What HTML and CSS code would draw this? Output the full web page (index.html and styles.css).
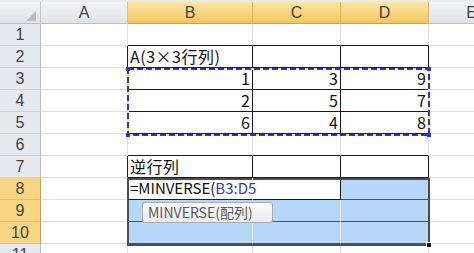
FILE: index.html
```html
<!DOCTYPE html>
<html lang="ja">
<head>
  <meta charset="UTF-8" />
  <title>MINVERSE</title>
  <link rel="stylesheet" href="styles.css">
</head>
<body>
  <div class="sheet">
    <div class="topbar"></div>
    <div class="grid">
      <!-- column headers -->
      <div class="hd corner">
        <svg width="41" height="22" viewBox="0 0 41 22"><polygon points="26,19 36,19 36,9" fill="#b8bdc4"/></svg>
      </div>
      <div class="hd">A</div>
      <div class="hd on">B</div>
      <div class="hd on">C</div>
      <div class="hd on">D</div>
      <div class="hd">E</div>

      <div class="rh">1</div>
      <div class="c"></div>
      <div class="c bt"></div>
      <div class="c bt"></div>
      <div class="c bt"></div>
      <div class="c"></div>

      <div class="rh">2</div>
      <div class="c bl"></div>
      <div class="c bx label">A(3×3行列)</div>
      <div class="c bx"></div>
      <div class="c bx"></div>
      <div class="c"></div>

      <div class="rh">3</div>
      <div class="c bl"></div>
      <div class="c bx n">1</div>
      <div class="c bx n">3</div>
      <div class="c bx n">9</div>
      <div class="c"></div>

      <div class="rh">4</div>
      <div class="c bl"></div>
      <div class="c bx n">2</div>
      <div class="c bx n">5</div>
      <div class="c bx n">7</div>
      <div class="c"></div>

      <div class="rh">5</div>
      <div class="c bl"></div>
      <div class="c bx n">6</div>
      <div class="c bx n">4</div>
      <div class="c bx n">8</div>
      <div class="c"></div>

      <div class="rh">6</div>
      <div class="c"></div>
      <div class="c bt"></div>
      <div class="c bt"></div>
      <div class="c bt"></div>
      <div class="c"></div>

      <div class="rh">7</div>
      <div class="c bl"></div>
      <div class="c bx label">逆行列</div>
      <div class="c bx"></div>
      <div class="c bx"></div>
      <div class="c"></div>

      <div class="rh on">8</div>
      <div class="c bl"></div>
      <div class="c bx edit">=MINVERSE(<span class="ref">B3:D5</span></div>
      <div class="c bx"></div>
      <div class="c bx sel"></div>
      <div class="c"></div>

      <div class="rh on">9</div>
      <div class="c bl"></div>
      <div class="c bx sel"></div>
      <div class="c bx sel"></div>
      <div class="c bx sel"></div>
      <div class="c"></div>

      <div class="rh on">10</div>
      <div class="c bl"></div>
      <div class="c bx sel"></div>
      <div class="c bx sel"></div>
      <div class="c bx sel"></div>
      <div class="c"></div>

      <div class="rh">11</div>
      <div class="c"></div>
      <div class="c"></div>
      <div class="c"></div>
      <div class="c"></div>
      <div class="c"></div>
    </div>

    <!-- range reference outline B3:D5 -->
    <svg class="refbox" width="305" height="70" viewBox="0 0 305 70">
      <rect x="2" y="2" width="301" height="66" fill="none" stroke="#f2ec5a" stroke-width="2"/>
      <rect x="2" y="2" width="301" height="66" fill="none" stroke="#2f2fd8" stroke-width="2" stroke-dasharray="6 3"/>
      <rect x="0" y="0" width="4" height="4" fill="#2f2fd8"/>
      <rect x="301" y="0" width="4" height="4" fill="#2f2fd8"/>
      <rect x="0" y="66" width="4" height="4" fill="#2f2fd8"/>
      <rect x="301" y="66" width="4" height="4" fill="#2f2fd8"/>
    </svg>

    <div class="selbox"></div>
    <div class="fillhandle"></div>

    <div class="tip">MINVERSE(配列)</div>
  </div>
</body>
</html>
```

FILE: styles.css
```css
* {
  box-sizing: border-box;
  margin: 0;
  padding: 0;
}

body {
  width: 474px;
  height: 253px;
  overflow: hidden;
  background: #fff;
  font-family: "Noto Sans CJK JP", "Liberation Sans", sans-serif;
  font-size: 15px;
  color: #111;
}

.sheet {
  position: relative;
  width: 560px;
}

.topbar {
  height: 3px;
  background: #e9ecef;
  border-bottom: 1px solid #c9cdd2;
}

.grid {
  display: grid;
  grid-template-columns: 41px 87px 125px 88px 88px 86px;
  grid-auto-rows: 22px;
  margin-top: -1px;
}

.c {
  border-right: 1px solid #dcdfe2;
  border-bottom: 1px solid #dcdfe2;
  padding: 0 2px;
  line-height: 20px;
  white-space: nowrap;
}

.n {
  text-align: right;
  font-size: 16px;
}

.label {
  font-size: 16px;
  letter-spacing: 0.5px;
}

.bt {
  border-bottom-color: #1a1a1a;
}

.bl {
  border-right-color: #1a1a1a;
}

.bx {
  border-right-color: #1a1a1a;
  border-bottom-color: #1a1a1a;
}

/* headers */
.hd, .rh {
  background: linear-gradient(#f1f3f5, #dfe3e8);
  border-right: 1px solid #c3c8cf;
  border-bottom: 1px solid #b9bec6;
  color: #444;
  text-align: center;
  line-height: 21px;
  font-family: "Liberation Sans", sans-serif;
  font-size: 16px;
}

.rh {
  background: #e6e9ed;
  border-bottom-color: #cfd3d9;
  border-right-color: #b9bec6;
}

.hd.on {
  background: linear-gradient(#fbe6a6, #f3c65e);
  border-right-color: #e2b654;
  border-bottom-color: #c9a04a;
}

.rh.on {
  background: #f8d684;
  border-bottom-color: #e8be5e;
  border-right-color: #c9a04a;
}

.corner svg {
  display: block;
}

/* edit cell */
.edit {
  position: relative;
  z-index: 1;
  border-right-color: #fff;
}

.ref {
  color: #3434c8;
}

.sel {
  background: #b7d7f8;
  border-right-color: #e4edf6;
  border-bottom-color: #36557a;
}

/* overlays */
.refbox {
  position: absolute;
  left: 126px;
  top: 67px;
}

.selbox {
  position: absolute;
  left: 127px;
  top: 178px;
  width: 303px;
  height: 68px;
  border: 2px solid #4d4d4d;
}

.fillhandle {
  position: absolute;
  left: 426px;
  top: 242px;
  width: 6px;
  height: 6px;
  background: #111;
  border: 1px solid #fff;
}

.tip {
  position: absolute;
  left: 142px;
  top: 202px;
  width: 131px;
  height: 21px;
  padding-left: 5px;
  background: linear-gradient(#fbfbfb, #ebebeb);
  border: 1px solid #a9acb0;
  border-radius: 3px;
  color: #5a5a5a;
  font-size: 14px;
  line-height: 19px;
  z-index: 2;
}
```
